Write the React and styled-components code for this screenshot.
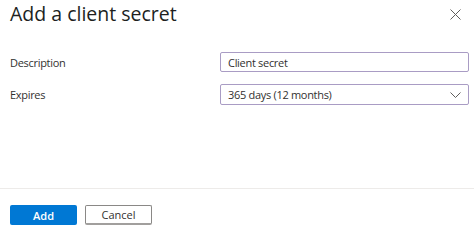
import React from "react";
import styled, { createGlobalStyle } from "styled-components";

const GlobalStyle = createGlobalStyle`
  html, body {
    margin: 0;
    padding: 0;
    background: #fff;
  }
  body {
    font-family: "Open Sans", "Noto Sans", sans-serif;
    color: #323130;
  }
`;

const Panel = styled.div`
  width: 474px;
  height: 228px;
  display: flex;
  flex-direction: column;
  overflow: hidden;
`;

const Header = styled.div`
  display: flex;
  align-items: center;
  justify-content: space-between;
  padding: 0 13px 0 10px;
  height: 26px;
`;

const Title = styled.h1`
  margin: 0;
  font-size: 19.5px;
  font-weight: 400;
  color: #201f1e;
`;

const CloseButton = styled.button`
  border: none;
  background: transparent;
  padding: 0;
  width: 11px;
  height: 11px;
  display: flex;
  color: #605e5c;
  margin-top: 2px;
`;

const Form = styled.div`
  display: flex;
  flex-direction: column;
  gap: 12px;
  padding: 26px 5px 0 10px;
`;

const Row = styled.div`
  display: grid;
  grid-template-columns: 210px 1fr;
  align-items: center;
`;

const Label = styled.label`
  font-size: 11px;
  letter-spacing: -0.3px;
  color: #323130;
`;

const Field = styled.div`
  box-sizing: border-box;
  height: ${(props) => props.h || 20}px;
  border: 1px solid #a99cc4;
  border-radius: 2px;
  display: flex;
  align-items: center;
  justify-content: space-between;
  padding: 0 7px 0 7px;
  font-size: 11px;
  letter-spacing: -0.3px;
  color: #323130;
`;

const Spacer = styled.div`
  flex: 1;
`;

const Footer = styled.div`
  box-sizing: border-box;
  border-top: 1px solid #edebe9;
  display: flex;
  gap: 8px;
  padding: 16px 10px 0;
  height: 40px;
`;

const Button = styled.button`
  box-sizing: border-box;
  width: 67px;
  height: 20px;
  border-radius: 2px;
  font-family: inherit;
  font-size: 11px;
  padding: 0;
  cursor: pointer;
  background: ${(props) => (props.primary ? "#0078d4" : "#fff")};
  color: ${(props) => (props.primary ? "#fff" : "#323130")};
  font-weight: ${(props) => (props.primary ? 600 : 400)};
  border: ${(props) => (props.primary ? "none" : "1px solid #8a8886")};
  border-bottom: ${(props) => (props.primary ? "none" : "2px solid #a19f9d")};
`;

const App = () => {
  return (
    <Panel>
      <GlobalStyle />
      <Header>
        <Title>Add a client secret</Title>
        <CloseButton aria-label="Close">
          <svg width="11" height="11" viewBox="0 0 11 11">
            <path d="M0.5 0.5L10.5 10.5M10.5 0.5L0.5 10.5" stroke="currentColor" strokeWidth="1" fill="none" />
          </svg>
        </CloseButton>
      </Header>
      <Form>
        <Row>
          <Label>Description</Label>
          <Field>Client secret</Field>
        </Row>
        <Row>
          <Label>Expires</Label>
          <Field h={21}>
            <span>365 days (12 months)</span>
            <svg width="11" height="6" viewBox="0 0 11 6">
              <path d="M0.5 0.5L5.5 5.5L10.5 0.5" stroke="#605e5c" strokeWidth="1" fill="none" />
            </svg>
          </Field>
        </Row>
      </Form>
      <Spacer />
      <Footer>
        <Button primary>Add</Button>
        <Button>Cancel</Button>
      </Footer>
    </Panel>
  );
};

export default App;
